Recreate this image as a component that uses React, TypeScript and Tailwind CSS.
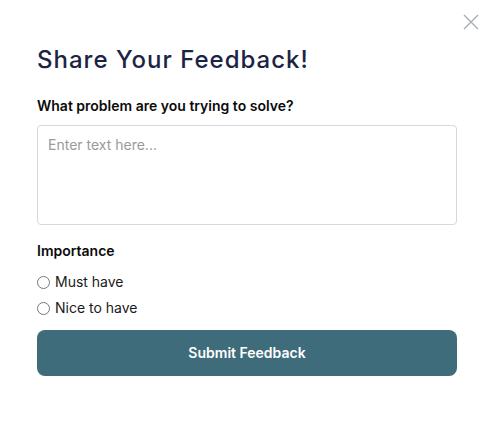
export default function App() {
  return (
    <div className="relative min-h-screen bg-white font-['Inter',sans-serif]">
      <button
        type="button"
        aria-label="Close"
        className="absolute left-[463px] top-[14px] text-[#a7adb9]"
      >
        <svg width="16" height="16" viewBox="0 0 16 16" fill="none">
          <path d="M1 1L15 15M15 1L1 15" stroke="currentColor" strokeWidth="1.4" />
        </svg>
      </button>

      <form className="flex flex-col px-[37px] pt-[44px] w-[494px]">
        <h1 className="text-[24px] leading-8 font-medium tracking-[0.042em] text-[#1c2446]">
          Share Your Feedback!
        </h1>

        <label className="mt-5 text-sm leading-5 font-semibold text-[#0b0b0b]">
          What problem are you trying to solve?
        </label>
        <textarea
          placeholder="Enter text here..."
          className="mt-[9px] h-[100px] w-full resize-none rounded-[4px] border border-[#d8d5e3] px-[10px] py-[9px] text-sm leading-5 text-[#222] placeholder:text-[#9a9a9a] outline-none"
        />

        <p className="mt-4 text-sm leading-5 font-semibold text-[#0b0b0b]">
          Importance
        </p>
        <div className="mt-[11px] flex flex-col gap-[6px]">
          <label className="flex items-center gap-[5px] text-sm leading-5 text-[#1a1a1a]">
            <input type="radio" name="importance" className="m-0 h-[13px] w-[13px]" />
            Must have
          </label>
          <label className="flex items-center gap-[5px] text-sm leading-5 text-[#1a1a1a]">
            <input type="radio" name="importance" className="m-0 h-[13px] w-[13px]" />
            Nice to have
          </label>
        </div>

        <button
          type="button"
          className="mt-3 h-[46px] w-full rounded-lg bg-[#3f6c7a] text-sm font-semibold text-white"
        >
          Submit Feedback
        </button>
      </form>
    </div>
  );
}
